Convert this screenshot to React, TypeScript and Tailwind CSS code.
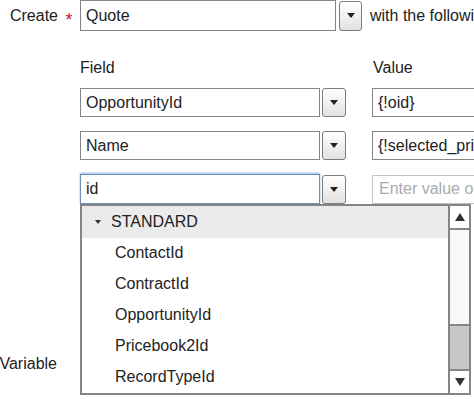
import React from "react";

function DropBtn({ h = "h-[29px]", w = "w-[24px]" }: { h?: string; w?: string }) {
  return (
    <div
      className={`${w} ${h} shrink-0 rounded-[3px] border border-[#7c7c7c] bg-gradient-to-b from-white to-[#e2e2e2] flex items-center justify-center`}
    >
      <div className="w-0 h-0 border-l-[4.5px] border-r-[4.5px] border-t-[5px] border-l-transparent border-r-transparent border-t-[#222]" />
    </div>
  );
}

function TextBox({
  children,
  className = "",
}: {
  children?: React.ReactNode;
  className?: string;
}) {
  return (
    <div
      className={`h-[29px] shrink-0 border-[1.5px] border-[#858585] bg-white flex items-center pl-[5px] whitespace-nowrap overflow-hidden ${className}`}
    >
      {children}
    </div>
  );
}

export default function App() {
  const items = ["ContactId", "ContractId", "OpportunityId", "Pricebook2Id", "RecordTypeId"];
  return (
    <div className="relative w-[474px] h-[399px] overflow-hidden bg-white text-[16px] leading-[18px] text-[#222] font-['Liberation_Sans',Arial,sans-serif]">
      <div className="w-[700px]">
        {/* Create row */}
        <div className="flex items-center h-[31px]">
          <div className="w-[58px] text-right">Create</div>
          <div className="w-[22px] flex justify-center">
            <span className="text-[#c0202a] text-[18px] leading-[18px] translate-y-[4px]">*</span>
          </div>
          <div className="w-[256px] h-[31px] border-[1.5px] border-[#858585] bg-white flex items-center pl-[5px]">Quote</div>
          <div className="ml-[3px]">
            <DropBtn h="h-[30px]" w="w-[23px]" />
          </div>
          <div className="ml-[8px] whitespace-nowrap">with the following values</div>
        </div>

        {/* headers */}
        <div className="flex mt-[28px]">
          <div className="w-[80px]" />
          <div className="w-[293px]">Field</div>
          <div>Value</div>
        </div>

        {/* rows */}
        <div className="flex flex-col gap-[14px] mt-[11px]">
          <div className="flex items-center">
            <div className="w-[80px]" />
            <TextBox className="w-[240px]">OpportunityId</TextBox>
            <div className="ml-[2px]"><DropBtn /></div>
            <TextBox className="ml-[26px] w-[200px]">{"{!oid}"}</TextBox>
          </div>
          <div className="flex items-center">
            <div className="w-[80px]" />
            <TextBox className="w-[240px]">Name</TextBox>
            <div className="ml-[2px]"><DropBtn /></div>
            <TextBox className="ml-[26px] w-[200px]">{"{!selected_pricebook}"}</TextBox>
          </div>
          <div className="flex items-center">
            <div className="w-[80px]" />
            <div className="w-[240px] h-[30px] shrink-0 border-[1.5px] border-[#6f8fb8] shadow-[0_-1px_2px_#8db4e0] bg-white flex items-center pl-[5px]">id</div>
            <div className="ml-[2px]"><DropBtn /></div>
            <div className="ml-[26px] w-[200px] h-[29px] shrink-0 border border-[#c4c4c4] bg-white flex items-center pl-[6px] text-[#aaa] whitespace-nowrap overflow-hidden">
              Enter value or select resource
            </div>
          </div>
        </div>

        {/* Variable label row (behind dropdown) */}
        <div className="flex mt-[151px]">
          <div className="w-[61px] -ml-[4px] text-right whitespace-nowrap">Variable</div>
        </div>
      </div>

      {/* dropdown menu */}
      <div className="absolute left-[80px] top-[204px] w-[391px] h-[191px] border-2 border-[#858585] bg-white flex">
        <div className="flex-1 flex flex-col">
          <div className="h-[32px] bg-[#ebebeb] flex items-center">
            <div className="ml-[13px] w-0 h-0 border-l-[3.5px] border-r-[3.5px] border-t-[4px] border-l-transparent border-r-transparent border-t-[#333]" />
            <div className="ml-[10px]">STANDARD</div>
          </div>
          {items.map((t) => (
            <div key={t} className="h-[31.5px] flex items-center pl-[33px]">
              {t}
            </div>
          ))}
        </div>
        <div className="w-[21px] border-l-2 border-[#858585] flex flex-col bg-[#f8f8f8]">
          <div className="h-[24px] border-b-2 border-[#858585] bg-white flex items-center justify-center">
            <div className="w-0 h-0 border-l-[5px] border-r-[5px] border-b-[8px] border-l-transparent border-r-transparent border-b-[#333]" />
          </div>
          <div className="flex-1" />
          <div className="h-[47px] bg-[#c8c8c8] border-y-2 border-[#858585]" />
          <div className="h-[22px] bg-white flex items-center justify-center">
            <div className="w-0 h-0 border-l-[5px] border-r-[5px] border-t-[8px] border-l-transparent border-r-transparent border-t-[#333]" />
          </div>
        </div>
      </div>
    </div>
  );
}
